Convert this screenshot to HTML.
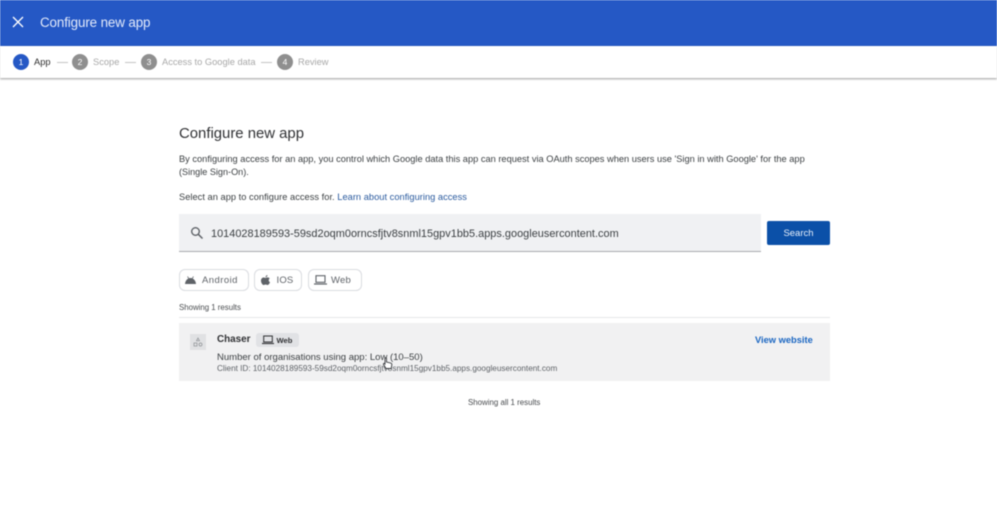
<!DOCTYPE html>
<html><head><meta charset="utf-8">
<style>
html,body{margin:0;padding:0;background:#fff;width:997px;height:515px;overflow:hidden}
body{font-family:"Liberation Sans",sans-serif;position:relative;filter:blur(.45px)}
.t{position:absolute;white-space:nowrap;line-height:1}
.b{position:absolute;box-sizing:border-box}
.c{position:absolute;width:16px;height:16px;border-radius:50%;background:#8f8f8f;color:#fff;font-size:8.5px;line-height:16px;text-align:center;top:54px}
.l{position:absolute;height:1px;background:#c4c4c4;top:62px;width:11px}
.chip{position:absolute;top:269px;height:22px;border:1px solid #dadce0;border-radius:6px;box-sizing:border-box}
svg{position:absolute}
</style></head><body>
<div class="b" style="left:0;top:0;width:997px;height:46px;background:#2558c5"></div>
<svg style="left:12px;top:16px" width="12" height="12" viewBox="0 0 12 12"><path d="M1 1L11 11M11 1L1 11" stroke="#fff" stroke-width="1.300" fill="none"/></svg>
<div class="t" style="left:40px;top:15.500px;font-size:13.400px;color:#e3eafa;letter-spacing:-.12px">Configure new app</div>

<div class="b" style="left:0;top:46px;width:997px;height:32px;background:#fff;box-shadow:0 1px 2px rgba(0,0,0,.4)"></div>
<div class="c" style="left:13px;background:#2558c5">1</div>
<div class="t" style="left:34px;top:57.500px;font-size:9.300px;color:#2b2b2b">App</div>
<div class="l" style="left:57px"></div>
<div class="c" style="left:72px">2</div>
<div class="t" style="left:93px;top:57.500px;font-size:9.300px;color:#a8a8a8">Scope</div>
<div class="l" style="left:125px"></div>
<div class="c" style="left:141px">3</div>
<div class="t" style="left:162px;top:57.500px;font-size:9.300px;color:#a8a8a8">Access to Google data</div>
<div class="l" style="left:261px"></div>
<div class="c" style="left:277px">4</div>
<div class="t" style="left:298px;top:57.500px;font-size:9.300px;color:#a8a8a8">Review</div>

<div class="t" style="left:179px;top:126.500px;font-size:14.900px;color:#303134">Configure new app</div>
<div class="t" style="left:179px;top:155px;font-size:9.280px;color:#3c4043">By configuring access for an app, you control which Google data this app can request via OAuth scopes when users use 'Sign in with Google' for the app</div>
<div class="t" style="left:179px;top:168px;font-size:9.100px;color:#3c4043">(Single Sign-On).</div>
<div class="t" style="left:179px;top:192.500px;font-size:9.280px;color:#3c4043;letter-spacing:.03px">Select an app to configure access for. <span style="color:#2a5a9e">Learn about configuring access</span></div>

<div class="b" style="left:179px;top:214px;width:582px;height:38px;background:#f0f1f3;border-bottom:1px solid #a9abae"></div>
<svg style="left:190px;top:226px" width="14" height="14" viewBox="0 0 14 14"><circle cx="5.500" cy="5.500" r="3.800" stroke="#5f6368" stroke-width="1.400" fill="none"/><path d="M8.300 8.300L12.500 12.500" stroke="#5f6368" stroke-width="1.500"/></svg>
<div class="t" style="left:211px;top:228.500px;font-size:10.920px;color:#3c4043;letter-spacing:.02px">1014028189593-59sd2oqm0orncsfjtv8snml15gpv1bb5.apps.googleusercontent.com</div>
<div class="b" style="left:767px;top:221px;width:63px;height:24px;background:#0b50a8;border-radius:2px"></div>
<div class="t" style="left:767px;width:63px;text-align:center;top:228.500px;font-size:9.500px;color:#e8f0fb">Search</div>

<div class="chip" style="left:179px;width:70px"></div>
<svg style="left:185px;top:276px" width="11" height="8" viewBox="0 0 11 8"><path d="M0 8C.3 4.500 2.500 2 5.500 2S10.700 4.500 11 8Z" fill="#5f6368"/><path d="M2.500 .5L3.800 2.500M8.500 .5L7.200 2.500" stroke="#5f6368" stroke-width=".7"/></svg>
<div class="t" style="left:202px;top:275.500px;font-size:9.500px;color:#5f6368;letter-spacing:.45px">Android</div>
<div class="chip" style="left:254px;width:48px"></div>
<svg style="left:261px;top:275px" width="9" height="10" viewBox="0 0 9 10"><path d="M6.500 0C6.500 1.300 5.500 2.300 4.500 2.300 4.500 1.100 5.500 .1 6.500 0ZM4.500 2.900C5.200 2.900 5.800 2.400 6.700 2.400 7.400 2.400 8.200 2.800 8.700 3.500 7.200 4.400 7.500 6.600 9 7.200 8.500 8.500 7.500 10 6.500 10 5.800 10 5.400 9.500 4.600 9.500S3.300 10 2.700 10C1.500 10 0 7.700 0 5.700 0 3.700 1.300 2.500 2.600 2.500 3.300 2.500 4 2.900 4.500 2.900Z" fill="#5f6368"/></svg>
<div class="t" style="left:276.500px;top:275.500px;font-size:9.500px;color:#5f6368;letter-spacing:.2px">IOS</div>
<div class="chip" style="left:308px;width:54px"></div>
<svg style="left:314px;top:275px" width="13" height="10" viewBox="0 0 13 10"><rect x="2" y=".7" width="9" height="6.600" fill="none" stroke="#5f6368" stroke-width="1.100"/><path d="M0 9H13" stroke="#5f6368" stroke-width="1.200"/></svg>
<div class="t" style="left:331px;top:275.500px;font-size:9.500px;color:#5f6368;letter-spacing:.2px">Web</div>

<div class="t" style="left:179px;top:303.500px;font-size:7.850px;color:#4a4d50">Showing 1 results</div>
<div class="b" style="left:179px;top:317px;width:651px;height:1px;background:#e6e7e8"></div>
<div class="b" style="left:179px;top:323px;width:651px;height:58px;background:#f1f1f2"></div>
<div class="b" style="left:190px;top:334px;width:16px;height:16px;background:#e0e1e3"></div>
<svg style="left:193px;top:337px" width="10" height="10" viewBox="0 0 10 10" fill="none" stroke="#8c8f93" stroke-width=".7"><path d="M5 1L6.500 3.800H3.500Z"/><rect x="1" y="6" width="3" height="3"/><circle cx="7.500" cy="7.500" r="1.500"/></svg>
<div class="t" style="left:217px;top:334.500px;font-size:10.300px;color:#303134;font-weight:bold;transform-origin:0 0;transform:scaleX(.96)">Chaser</div>
<div class="b" style="left:256px;top:333px;width:43px;height:14px;background:#e1e2e5;border-radius:3px"></div>
<svg style="left:262px;top:335px" width="12" height="10" viewBox="0 0 12 10"><rect x="1.700" y="1" width="8.600" height="6" fill="none" stroke="#303134" stroke-width="1"/><path d="M0 8.500H12" stroke="#303134" stroke-width="1.100"/></svg>
<div class="t" style="left:276.500px;top:336.500px;font-size:7.600px;color:#303134;font-weight:bold">Web</div>
<div class="t" style="left:217px;top:352.500px;font-size:9.530px;color:#3c4043">Number of organisations using app: Low (10–50)</div>
<div class="t" style="left:217px;top:365px;font-size:8.190px;color:#5f6368">Client ID: 1014028189593-59sd2oqm0orncsfjtv8snml15gpv1bb5.apps.googleusercontent.com</div>
<svg style="left:382px;top:357px" width="11" height="13" viewBox="0 0 11 13"><path d="M3 1.500C3 .5 4.500 .5 4.500 1.500V5L8.500 6C9.500 6.300 10 7 9.800 8L9.200 11.500H4L1.500 7.500C1 6.500 2 6 2.800 6.800L3 7Z" fill="#fff" stroke="#33363a" stroke-width=".9"/></svg>
<div class="t" style="left:755px;top:335.500px;font-size:9.600px;color:#1a66c2;font-weight:bold;transform-origin:0 0;transform:scaleX(.97)">View website</div>
<div class="t" style="left:468px;top:399px;font-size:7.900px;color:#4a4d50">Showing all 1 results</div>
</body></html>
